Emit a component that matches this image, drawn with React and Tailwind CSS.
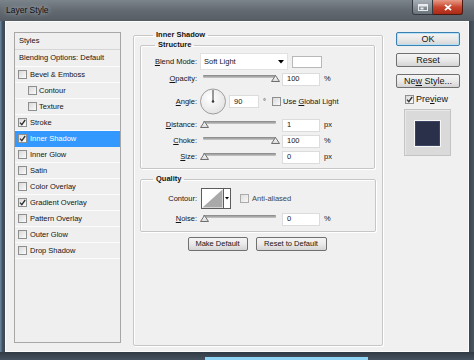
import React from "react";

const Check = ({ checked, className = "" }) => (
  <span
    className={
      "inline-flex w-[9px] h-[9px] shrink-0 items-center justify-center border border-[#8e8f8f] bg-gradient-to-br from-[#d9d9d9] to-[#fbfbfb] " +
      className
    }
  >
    {checked && (
      <svg width="7" height="7" viewBox="0 0 7 7">
        <path d="M1 3.6 L2.8 5.6 L6.2 1" stroke="#2e2e2e" strokeWidth="1.3" fill="none" />
      </svg>
    )}
  </span>
);

const Slider = ({ thumb }) => (
  <div className="relative ml-[6px] w-[73px] h-[14px] shrink-0">
    <div className="mt-[3px] h-[3px] rounded-[1px] bg-gradient-to-b from-[#858585] to-[#c9c9c9]" />
    <svg className={"absolute top-[3px] " + thumb} width="9" height="7" viewBox="0 0 9 7">
      <defs>
        <linearGradient id="tg" x1="0" y1="0" x2="0" y2="1">
          <stop offset="0" stopColor="#ffffff" />
          <stop offset="1" stopColor="#d8d8d8" />
        </linearGradient>
      </defs>
      <polygon points="4.5,0.5 8.5,6.5 0.5,6.5" fill="url(#tg)" stroke="#6f6f6f" strokeWidth="1" />
    </svg>
  </div>
);

const Field = ({ value, className }) => (
  <div
    className={
      "h-[13px] shrink-0 bg-white border border-[#dcdcdc] flex items-center pl-[4px] leading-none " + className
    }
  >
    {value}
  </div>
);

const Label = ({ children }) => (
  <div className="w-[56px] shrink-0 text-right leading-none">{children}</div>
);

const Btn = ({ children, className = "" }) => (
  <div
    className={
      "flex items-center justify-center rounded-[2px] bg-gradient-to-b from-[#f4f4f4] via-[#eaeaea] to-[#d4d4d4] leading-none " +
      className
    }
  >
    {children}
  </div>
);

const SliderRow = ({ label, thumb, value, unit, className = "" }) => (
  <div className={"flex items-center h-[14px] " + className}>
    <Label>{label}</Label>
    <Slider thumb={thumb} />
    <Field value={value} className="ml-[6px] w-[38px]" />
    <span className="ml-[4px] leading-none">{unit}</span>
  </div>
);

const items = [
  { label: "Bevel & Emboss" },
  { label: "Contour", indent: true },
  { label: "Texture", indent: true },
  { label: "Stroke", checked: true },
  { label: "Inner Shadow", checked: true, active: true },
  { label: "Inner Glow" },
  { label: "Satin" },
  { label: "Color Overlay" },
  { label: "Gradient Overlay", checked: true },
  { label: "Pattern Overlay" },
  { label: "Outer Glow" },
  { label: "Drop Shadow" },
];

export default function App() {
  return (
    <div className="w-[474px] h-[360px] overflow-hidden flex flex-col bg-[#3d4955] font-['Liberation_Sans',Arial,sans-serif] text-[#141414]">
      {/* Title bar */}
      <div className="h-[21px] shrink-0 flex items-start bg-gradient-to-b from-[#7b838b] via-[#636a72] to-[#555c63]">
        <div className="ml-[6px] mt-[6px] text-[8.5px] leading-none text-[#101010] [text-shadow:0_0_5px_rgba(255,255,255,0.7)]">
          Layer Style
        </div>
        <div className="ml-auto mr-[11px] flex">
          <div className="w-[21px] h-[15px] flex items-center justify-center rounded-bl-[3px] border border-t-0 border-[#353a40] bg-gradient-to-b from-[#a7aeb5] to-[#6b737b]">
            <svg width="10" height="7" viewBox="0 0 10 7">
              <rect x="0.5" y="0.5" width="9" height="6" fill="none" stroke="#e8ecef" strokeWidth="1" />
              <rect x="0.5" y="0.5" width="9" height="2" fill="#e8ecef" />
              <rect x="2.5" y="3.5" width="3" height="2" fill="#e8ecef" />
            </svg>
          </div>
          <div className="w-[30px] h-[15px] flex items-center justify-center rounded-br-[3px] border border-t-0 border-l-0 border-[#4a1a12] bg-gradient-to-b from-[#e69a88] via-[#c9452d] to-[#a92a16]">
            <svg width="8" height="7" viewBox="0 0 8 7">
              <path d="M1 0.8 L7 6.2 M7 0.8 L1 6.2" stroke="#ffffff" strokeWidth="1.8" />
            </svg>
          </div>
        </div>
      </div>

      <div className="flex h-[331px] shrink-0">
        {/* left frame */}
        <div className="w-[5px] shrink-0 bg-gradient-to-r from-[#6f8aa3] via-[#44515e] to-[#3b4652]" />
        {/* client */}
        <div className="w-[464px] shrink-0 bg-[#f0f0f0] border border-[#fbfbfb] flex items-start text-[7.5px]">
          {/* Styles list */}
          <div className="ml-[8px] mt-[10px] w-[107px] h-[311px] shrink-0 border border-[#a7a7a7] bg-[#efefef] flex flex-col">
            <div className="h-[17px] flex items-center pl-[4px] border-b border-[#d6d6d6] leading-none">Styles</div>
            <div className="h-[17px] flex items-center pl-[4px] border-b border-[#fcfcfc] leading-none">
              Blending Options: Default
            </div>
            {items.map((it) => (
              <div
                key={it.label}
                className={
                  "h-[16px] flex items-center border-b leading-none " +
                  (it.indent ? "pl-[13px] " : "pl-[3px] ") +
                  (it.active ? "bg-[#3399ff] text-white border-[#3399ff]" : "border-[#fcfcfc]")
                }
              >
                <Check checked={it.checked} className={it.active ? "bg-white" : ""} />
                <span className={it.indent ? "ml-[2px]" : "ml-[3px]"}>{it.label}</span>
              </div>
            ))}
          </div>

          {/* Main fieldset */}
          <fieldset className="ml-[12px] mt-[8px] w-[249px] h-[316px] shrink-0 border border-[#c6c6c6] rounded-[2px] px-[6px] [box-shadow:inset_1px_1px_0_#fff,1px_1px_0_#fff]">
            <legend className="ml-[13px] px-[3px] font-bold leading-[10px]">Inner Shadow</legend>

            {/* Structure */}
            <fieldset className="w-[235px] border border-[#c6c6c6] rounded-[2px] pb-[4px] [box-shadow:inset_1px_1px_0_#fff,1px_1px_0_#fff]">
              <legend className="ml-[14px] px-[3px] font-bold leading-[10px]">Structure</legend>
              <div className="flex items-center h-[17px] mt-[3px]">
                <Label>
                  <span className="underline">B</span>lend Mode:
                </Label>
                <div className="ml-[3px] w-[88px] h-[17px] shrink-0 bg-white border border-[#e2e2e2] flex items-center pl-[3px] pr-[3px] leading-none">
                  <span>Soft Light</span>
                  <svg className="ml-auto" width="6" height="4" viewBox="0 0 6 4">
                    <path d="M0 0 H6 L3 3.5 Z" fill="#000" />
                  </svg>
                </div>
                <div className="ml-[4px] w-[30px] h-[12px] shrink-0 bg-white border border-[#b8b8b8]" />
              </div>
              <SliderRow
                className="mt-[2px]"
                label={<><span className="underline">O</span>pacity:</>}
                thumb="left-[68px]"
                value="100"
                unit="%"
              />
              <div className="flex items-center h-[27px] mt-[2px]">
                <Label>
                  <span className="underline">A</span>ngle:
                </Label>
                <svg className="ml-[2px] shrink-0" width="28" height="27" viewBox="0 0 28 27">
                  <defs>
                    <radialGradient id="dg" cx="0.4" cy="0.35" r="0.7">
                      <stop offset="0" stopColor="#ffffff" />
                      <stop offset="1" stopColor="#e2e2e2" />
                    </radialGradient>
                  </defs>
                  <circle cx="14" cy="13.5" r="12.5" fill="url(#dg)" stroke="#9d9d9d" strokeWidth="1" />
                  <line x1="14" y1="13.5" x2="14" y2="2" stroke="#3a3a3a" strokeWidth="1" />
                  <circle cx="14" cy="13.5" r="1.3" fill="#3a3a3a" />
                </svg>
                <Field value="90" className="ml-[2px] w-[30px]" />
                <span className="ml-[4px] leading-none">°</span>
                <Check className="ml-[6px]" />
                <span className="ml-[2px] leading-none">
                  Use <span className="underline">G</span>lobal Light
                </span>
              </div>
              <SliderRow
                className="mt-[3px]"
                label={<><span className="underline">D</span>istance:</>}
                thumb="left-[-3px]"
                value="1"
                unit="px"
              />
              <SliderRow
                className="mt-[2px]"
                label={<><span className="underline">C</span>hoke:</>}
                thumb="left-[68px]"
                value="100"
                unit="%"
              />
              <SliderRow
                className="mt-[2px]"
                label={<><span className="underline">S</span>ize:</>}
                thumb="left-[-3px]"
                value="0"
                unit="px"
              />
            </fieldset>

            {/* Quality */}
            <fieldset className="mt-[5px] w-[236px] border border-[#c6c6c6] rounded-[2px] pb-[5px] [box-shadow:inset_1px_1px_0_#fff,1px_1px_0_#fff]">
              <legend className="ml-[12px] px-[3px] font-bold leading-[10px]">Quality</legend>
              <div className="flex items-center h-[21px] mt-[4px]">
                <Label>Contour:</Label>
                <svg className="ml-[4px] shrink-0" width="30" height="21" viewBox="0 0 30 21">
                  <rect x="0.5" y="0.5" width="29" height="20" fill="#ffffff" stroke="#5c5c5c" />
                  <polygon points="1.5,19.5 21.5,1.5 21.5,19.5" fill="#a9a9a9" />
                  <line x1="22.5" y1="0" x2="22.5" y2="21" stroke="#5c5c5c" />
                  <polygon points="24,9 28,9 26,11.5" fill="#000" />
                </svg>
                <Check className="ml-[9px] opacity-70" />
                <span className="ml-[3px] leading-none text-[#444]">Anti-aliased</span>
              </div>
              <SliderRow
                className="mt-[3px]"
                label={<><span className="underline">N</span>oise:</>}
                thumb="left-[-3px]"
                value="0"
                unit="%"
              />
            </fieldset>

            <div className="mt-[5px] flex justify-center gap-[8px] pr-[2px]">
              <Btn className="w-[60px] h-[14px] border border-[#707070]">Make Default</Btn>
              <Btn className="w-[71px] h-[14px] border border-[#707070]">Reset to Default</Btn>
            </div>
          </fieldset>

          {/* Right column */}
          <div className="ml-[13px] mt-[10px] w-[64px] shrink-0 flex flex-col text-[9px]">
            <Btn className="h-[14px] border border-[#3c7fb1] [box-shadow:inset_0_0_0_1px_#b5e2f7]">OK</Btn>
            <Btn className="mt-[7px] h-[14px] border border-[#707070]">Reset</Btn>
            <Btn className="mt-[7px] h-[14px] border border-[#707070]">
              Ne<span className="underline">w</span>&nbsp;Style...
            </Btn>
            <div className="mt-[6px] flex items-center h-[10px] pl-[9px]">
              <Check checked className="bg-white" />
              <span className="ml-[2px] leading-none">
                Pre<span className="underline">v</span>iew
              </span>
            </div>
            <div className="mt-[5px] ml-[8px] w-[47px] h-[47px] bg-[#dadada] border border-[#c4c4c4] [box-shadow:inset_1px_1px_0_#e8e8e8]">
              <div className="mt-[10px] ml-[9px] w-[27px] h-[27px] bg-[#2a3049] border border-[#f6f6f6] [box-shadow:inset_0_0_0_1px_#3c4462]" />
            </div>
          </div>
        </div>
        {/* right frame */}
        <div className="w-[5px] shrink-0 bg-gradient-to-r from-[#3b4652] to-[#4a5662]" />
      </div>

      {/* bottom frame */}
      <div className="flex-1 flex flex-col justify-end bg-gradient-to-b from-[#2f3a45] to-[#46525e]">
        <div className="ml-[205px] w-[163px] h-[3px] bg-[#8fd3f5]" />
      </div>
    </div>
  );
}
